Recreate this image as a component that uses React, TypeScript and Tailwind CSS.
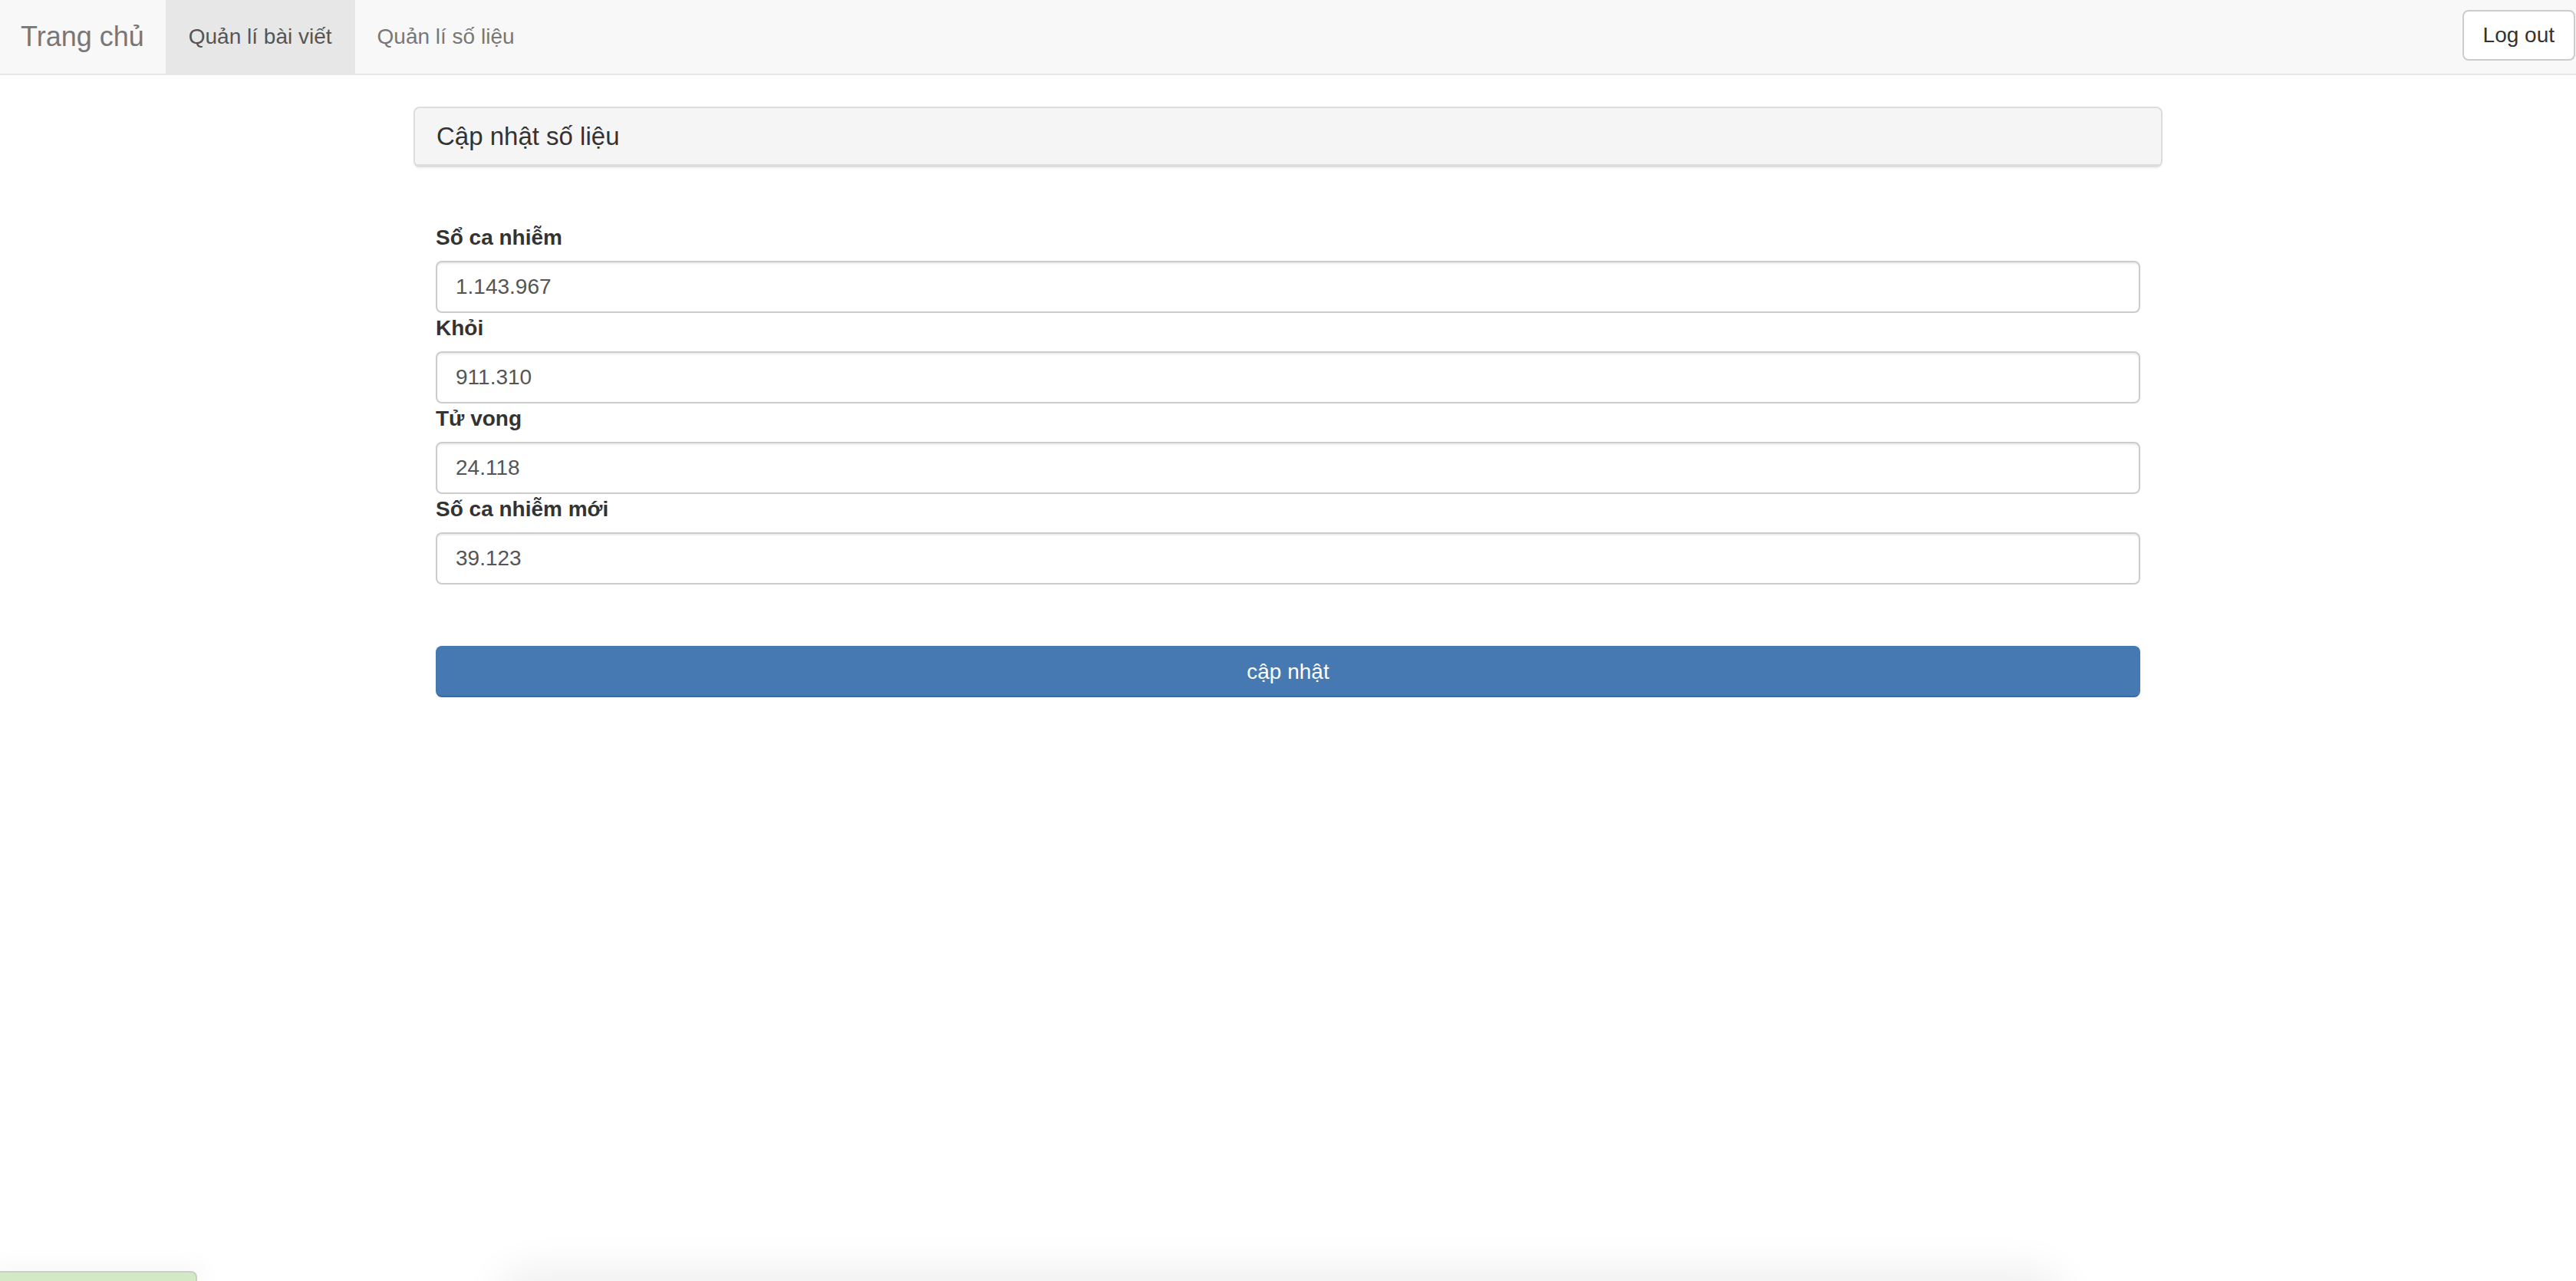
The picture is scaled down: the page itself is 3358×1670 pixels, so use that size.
import React from "react";

const fields = [
  { label: "Sổ ca nhiễm", value: "1.143.967" },
  { label: "Khỏi", value: "911.310" },
  { label: "Tử vong", value: "24.118" },
  { label: "Số ca nhiễm mới", value: "39.123" },
];

export default function App() {
  return (
    <div
      className="min-h-screen bg-white text-[#333] relative overflow-hidden"
      style={{ fontFamily: '"Liberation Sans", Arial, sans-serif' }}
    >
      {/* Navbar */}
      <nav className="h-[98px] bg-[#f8f8f8] border-b-2 border-[#e7e7e7] flex items-stretch justify-between">
        <div className="flex items-stretch">
          <a className="flex items-center pl-[27px] pr-[28px] text-[36px] text-[#777] leading-none">
            Trang chủ
          </a>
          <a className="flex items-center px-[30px] text-[28px] text-[#555] bg-[#e7e7e7]">
            Quản lí bài viết
          </a>
          <a className="flex items-center px-[29px] text-[28px] text-[#777]">
            Quản lí số liệu
          </a>
        </div>
        <div className="flex items-start pt-[13px] pr-[1px]">
          <button className="h-[66px] px-[25px] bg-white border-2 border-[#ccc] rounded-[8px] text-[28px] text-[#333]">
            Log out
          </button>
        </div>
      </nav>

      {/* Content */}
      <div className="w-[2340px] mx-auto px-[30px] pt-[41px]">
        <div className="border-2 border-[#ddd] rounded-[8px] bg-[#f5f5f5] shadow-[0_2px_2px_rgba(0,0,0,0.05)]">
          <div className="h-[75px] px-[28px] flex items-center border-b-2 border-[#ddd] rounded-t-[6px]">
            <h3 className="text-[33px] text-[#333] leading-none">Cập nhật số liệu</h3>
          </div>
        </div>

        <form className="px-[29px] pt-[72px]">
          {fields.map((f) => (
            <div key={f.label} className="flex flex-col">
              <label className="text-[28px] font-bold text-[#333] leading-[40px] mb-[10px]">
                {f.label}
              </label>
              <input
                readOnly
                value={f.value}
                className="h-[68px] w-full px-[24px] text-[28px] text-[#555] bg-white border-2 border-[#ccc] rounded-[8px] shadow-[inset_0_2px_2px_rgba(0,0,0,0.075)] outline-none"
              />
            </div>
          ))}
          <button
            type="button"
            className="mt-[80px] w-full h-[67px] bg-[#4679b2] border-2 border-[#4679b2] border-b-[#3c6aa0] rounded-[8px] text-white text-[28px]"
          >
            cập nhật
          </button>
        </form>
      </div>

      {/* bottom overlays */}
      <div className="fixed left-[664px] bottom-[-60px] w-[2010px] h-[60px] rounded-[40px] shadow-[0_0_50px_20px_rgba(0,0,0,0.06)]" />
      <div className="fixed left-0 bottom-0 w-[257px] h-[13px] bg-[#d3e8c4] border-t-2 border-r-2 border-[#c9cfc4] rounded-tr-[8px] shadow-[0_0_30px_10px_rgba(0,0,0,0.03)]" />
    </div>
  );
}
